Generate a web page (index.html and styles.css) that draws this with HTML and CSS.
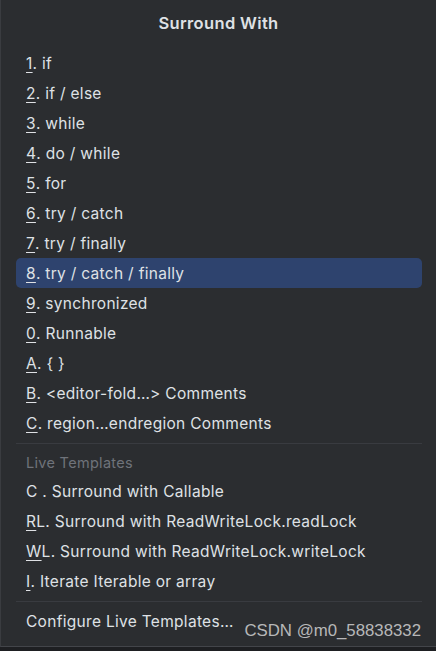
FILE: index.html
```html
<!DOCTYPE html>
<html>
<head>
<meta charset="utf-8">
<link rel="stylesheet" href="styles.css">
</head>
<body>
<div class="popup">
  <div class="title">Surround With</div>
  <ul class="list">
    <li class="item"><u>1</u>. if</li>
    <li class="item"><u>2</u>. if / else</li>
    <li class="item"><u>3</u>. while</li>
    <li class="item"><u>4</u>. do / while</li>
    <li class="item"><u>5</u>. for</li>
    <li class="item"><u>6</u>. try / catch</li>
    <li class="item"><u>7</u>. try / finally</li>
    <li class="item selected"><u>8</u>. try / catch / finally</li>
    <li class="item"><u>9</u>. synchronized</li>
    <li class="item"><u>0</u>. Runnable</li>
    <li class="item"><u>A</u>. { }</li>
    <li class="item"><u>B</u>. &lt;editor-fold…&gt; Comments</li>
    <li class="item"><u>C</u>. region…endregion Comments</li>
  </ul>
  <div class="sep"></div>
  <div class="group">Live Templates</div>
  <ul class="list">
    <li class="item">C . Surround with Callable</li>
    <li class="item"><u>R</u>L. Surround with ReadWriteLock.readLock</li>
    <li class="item"><u>W</u>L. Surround with ReadWriteLock.writeLock</li>
    <li class="item"><u>I</u>. Iterate Iterable or array</li>
  </ul>
  <div class="sep"></div>
  <div class="item configure">Configure Live Templates…</div>
  <div class="watermark">CSDN @m0_58838332</div>
</div>
</body>
</html>
```

FILE: styles.css
```css
html, body {
  margin: 0;
  padding: 0;
  background: #1e1f22;
}
body {
  width: 436px;
  height: 651px;
  overflow: hidden;
  font-family: Inter, "Noto Sans", sans-serif;
}
.popup {
  position: relative;
  box-sizing: border-box;
  width: 436px;
  height: 647px;
  background: #2b2d30;
  border-left: 1px solid #3a3c40;
  border-bottom: 1px solid #43454a;
}
.title {
  height: 48px;
  display: flex;
  align-items: center;
  justify-content: center;
  color: #dfe1e5;
  font-size: 16.5px;
  font-weight: 600;
  letter-spacing: 0.35px;
  padding-bottom: 2px;
  box-sizing: border-box;
}
.list {
  list-style: none;
  margin: 0;
  padding: 0;
}
.item {
  height: 30px;
  display: flex;
  align-items: center;
  margin: 0 14px 0 15px;
  padding-left: 10px;
  border-radius: 5px;
  color: #dfe1e5;
  font-size: 15.5px;
  letter-spacing: 0.3px;
  white-space: pre;
}
.item u {
  text-decoration: underline;
  text-underline-offset: 3px;
  text-decoration-thickness: 1px;
}
.item.selected {
  background: #2e436e;
}
.sep {
  height: 1px;
  margin: 5px 14px 4px 15px;
  background: #393b40;
}
.group {
  height: 28px;
  display: flex;
  align-items: center;
  padding-left: 25px;
  color: #6f737a;
  font-size: 14.5px;
  letter-spacing: 0.3px;
}
.configure {
  margin-top: 1px;
}
.watermark {
  position: absolute;
  right: 15px;
  bottom: 5px;
  color: #d0d0d0;
  font-family: "Liberation Sans", Arial, sans-serif;
  font-size: 16.8px;
  opacity: 0.85;
}
```
